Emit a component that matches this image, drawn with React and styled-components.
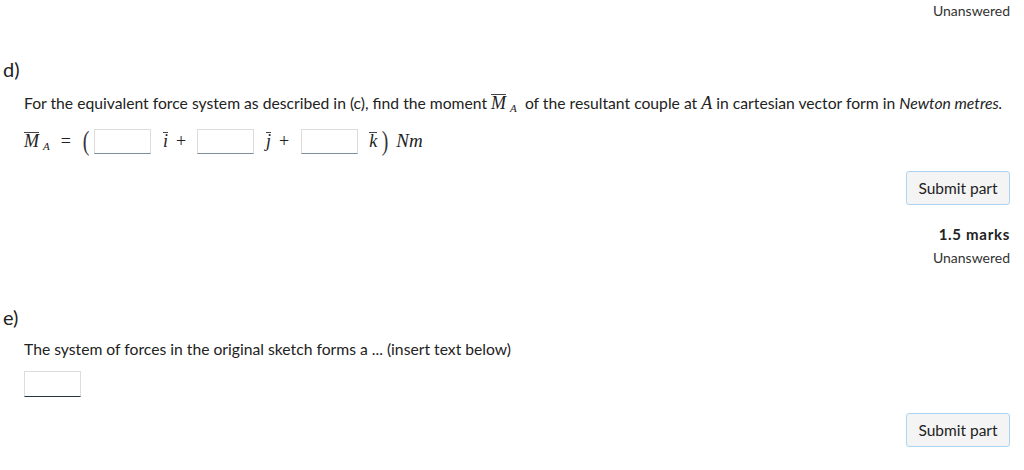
import React from 'react';
import styled, { createGlobalStyle } from 'styled-components';

const Global = createGlobalStyle`
    body {
        margin: 0;
        background: #fff;
        font-family: Lato, "Noto Sans", sans-serif;
        color: #222;
    }
`

const Page = styled.div`
    width: 1024px;
    height: 470px;
    padding: 0 14px 0 3px;
    box-sizing: border-box;
    overflow: hidden;
`

const Status = styled.div`
    text-align: right;
    font-size: 14px;
    color: #333;
    line-height: 18px;
    margin-top: ${props => props.top || 0}px;
`

const Marks = styled.div`
    text-align: right;
    font-size: 15px;
    font-weight: bold;
    letter-spacing: 0.7px;
    color: #222;
    line-height: 18px;
    margin-top: 20px;
`

const PartLabel = styled.div`
    font-size: 20px;
    line-height: 24px;
    color: #222;
    margin-top: ${props => props.top}px;
`

const Body = styled.div`
    padding-left: 21px;
`

const Prompt = styled.p`
    margin: ${props => props.top}px 0 0;
    font-size: 15.7px;
    line-height: 20px;
    color: #222;
`

const Math = styled.span`
    font-family: "Liberation Serif", "DejaVu Serif", serif;
    font-style: ${props => props.upright ? 'normal' : 'italic'};
    font-size: 18px;
`

const Vec = styled.span`
    display: inline-block;
    border-top: 1px solid #444;
    line-height: 15px;
    padding-top: 1px;
`

const Sub = styled.sub`
    font-size: 11px;
    vertical-align: -3px;
    margin-left: 4px;
`

const Italic = styled.em`
    font-style: italic;
`

const EqRow = styled.div`
    display: flex;
    align-items: center;
    margin-top: 10px;
    height: 26px;
`

const Token = styled.span`
    font-family: "Liberation Serif", "DejaVu Serif", serif;
    font-size: ${props => props.size || 18}px;
    font-style: ${props => props.upright ? 'normal' : 'italic'};
    color: #222;
    margin-left: ${props => props.ml || 0}px;
`

const Paren = styled.span`
    display: inline-block;
    font-family: "Liberation Serif", "DejaVu Serif", serif;
    font-size: 18px;
    color: #333;
    transform: scale(1.1, 1.55);
    margin-left: ${props => props.ml || 0}px;
`

const Blank = styled.input`
    width: 57px;
    height: ${props => props.h || 25}px;
    box-sizing: border-box;
    border: 1px solid #dcdcdc;
    border-bottom: 1px solid ${props => props.dark ? '#253645' : '#7f8f9c'};
    background: #fff;
    margin: ${props => props.mt || 0}px 0 0 ${props => props.ml || 0}px;
    padding: 0 4px;
    outline: none;
`

const Actions = styled.div`
    display: flex;
    justify-content: flex-end;
    margin-top: ${props => props.top}px;
`

const SubmitBtn = styled.button`
    width: 104px;
    height: 34px;
    box-sizing: border-box;
    background: #f4f4f4;
    border: 1px solid #a9d5f2;
    border-radius: 3px;
    font-family: Lato, "Noto Sans", sans-serif;
    font-size: 15.5px;
    color: #222;
    padding: 0;
`

const Vector = ({ children }) => <Vec>{children}</Vec>

const App = () => {
    return (
        <Page>
            <Global />
            <Status top={2}>Unanswered</Status>

            <PartLabel top={37}>d)</PartLabel>
            <Body>
                <Prompt top={12}>
                    For the equivalent force system as described in (c), find the moment{' '}
                    <Math><Vector>M</Vector><Sub>A</Sub></Math>{'  '}&nbsp;of the resultant couple at <Math>A</Math> in cartesian vector form in <Italic>Newton metres.</Italic>
                </Prompt>
                <EqRow>
                    <Token><Vector>M</Vector><Sub>A</Sub></Token>
                    <Token upright ml={11}>=</Token>
                    <Paren ml={12}>(</Paren>
                    <Blank ml={5} />
                    <Token ml={12}><Vector>i</Vector></Token>
                    <Token upright ml={8}>+</Token>
                    <Blank ml={11} />
                    <Token ml={12}><Vector>j</Vector></Token>
                    <Token upright ml={8}>+</Token>
                    <Blank ml={12} />
                    <Token ml={11}><Vector>k</Vector></Token>
                    <Paren ml={5}>)</Paren>
                    <Token ml={8} size={19}>Nm</Token>
                </EqRow>
            </Body>
            <Actions top={17}><SubmitBtn>Submit part</SubmitBtn></Actions>
            <Marks>1.5 marks</Marks>
            <Status top={6}>Unanswered</Status>

            <PartLabel top={38}>e)</PartLabel>
            <Body>
                <Prompt top={10}>The system of forces in the original sketch forms a ... (insert text below)</Prompt>
                <Blank dark h={26} mt={12} />
            </Body>
            <Actions top={16}><SubmitBtn>Submit part</SubmitBtn></Actions>
        </Page>
    )
}

export default App;
